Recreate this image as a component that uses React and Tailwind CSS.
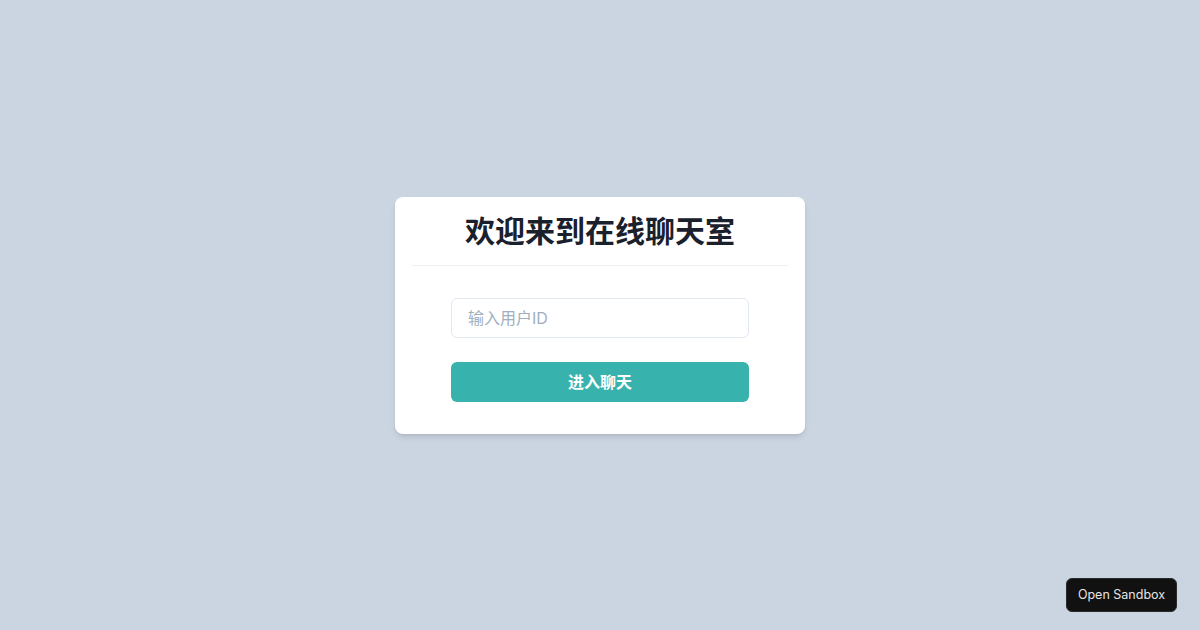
export default function App() {
  return (
    <div
      className="relative flex h-[630px] w-full items-center justify-center bg-[#cbd5e1]"
      style={{ fontFamily: '"Inter", "Noto Sans CJK SC", sans-serif' }}
    >
      <div className="w-[410px] rounded-lg bg-white px-4 pt-4 shadow-md">
        <div className="border-b border-[#edf2f7] pb-4 text-center">
          <h1 className="text-3xl font-bold text-[#1a202c]">欢迎来到在线聊天室</h1>
        </div>
        <form className="space-y-6 px-10 py-8" onSubmit={(e) => e.preventDefault()}>
          <input
            type="text"
            placeholder="输入用户ID"
            className="block h-10 w-full rounded-md border border-[#e2e8f0] px-4 text-base text-gray-700 placeholder-[#a0aec0] outline-none"
          />
          <button
            type="submit"
            className="block h-10 w-full rounded-md bg-[#38b2ac] text-base font-semibold text-white"
          >
            进入聊天
          </button>
        </form>
      </div>
      <button
        type="button"
        className="absolute bottom-[18px] right-[23px] h-[34px] w-[111px] rounded-md border border-[#2a2a2a] bg-[#111111] text-[12.5px] text-[#e5e5e5]"
      >
        Open Sandbox
      </button>
    </div>
  );
}
